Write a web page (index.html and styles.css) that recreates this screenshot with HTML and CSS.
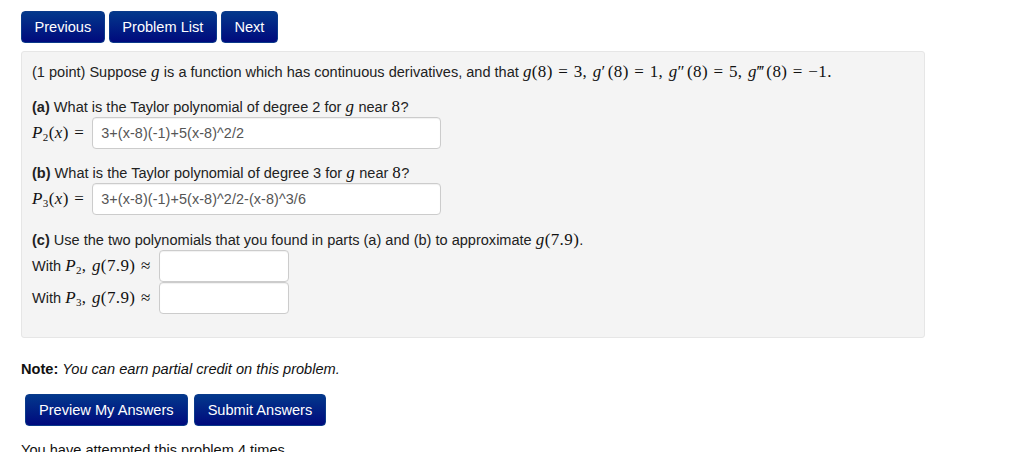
FILE: index.html
```html
<!DOCTYPE html>
<html lang="en">
<head>
<meta charset="utf-8">
<title>Problem</title>
<link rel="stylesheet" href="styles.css">
</head>
<body>
<nav class="nav">
  <a class="btn">Previous</a>
  <a class="btn">Problem List</a>
  <a class="btn">Next</a>
</nav>
<section class="panel">
  <p class="intro">(1 point) Suppose <span class="m"><i>g</i></span> is a function which has continuous derivatives, and that <span class="m"><i>g</i>(8) = 3, <i>g</i><span class="pr">′</span>(8) = 1, <i>g</i><span class="pr">″</span>(8) = 5, <i>g</i><span class="pr">‴</span>(8) = −1.</span></p>

  <p class="q"><b>(a)</b> What is the Taylor polynomial of degree 2 for <span class="m"><i>g</i></span> near <span class="m">8</span>?</p>
  <div class="row"><span class="m"><i>P</i><sub>2</sub>(<i>x</i>) =</span><input class="in wide" type="text" value="3+(x-8)(-1)+5(x-8)^2/2"></div>

  <p class="q q-b"><b>(b)</b> What is the Taylor polynomial of degree 3 for <span class="m"><i>g</i></span> near <span class="m">8</span>?</p>
  <div class="row"><span class="m"><i>P</i><sub>3</sub>(<i>x</i>) =</span><input class="in wide" type="text" value="3+(x-8)(-1)+5(x-8)^2/2-(x-8)^3/6"></div>

  <p class="q q-c"><b>(c)</b> Use the two polynomials that you found in parts (a) and (b) to approximate <span class="m"><i>g</i>(7.9)</span>.</p>
  <div class="row">With <span class="m"><i>P</i><sub>2</sub>, <i>g</i>(7.9) ≈</span><input class="in small" type="text"></div>
  <div class="row">With <span class="m"><i>P</i><sub>3</sub>, <i>g</i>(7.9) ≈</span><input class="in small" type="text"></div>
</section>
<p class="note"><b>Note:</b> <i>You can earn partial credit on this problem.</i></p>
<div class="actions">
  <a class="btn">Preview My Answers</a>
  <a class="btn">Submit Answers</a>
</div>
<p class="attempts">You have attempted this problem 4 times.</p>
</body>
</html>
```

FILE: styles.css
```css
html, body { margin: 0; height: 452px; overflow: hidden; background: #fff; }
body {
  padding: 11px 21px 0;
  box-sizing: border-box;
  font: 14.6px/20px "Liberation Sans", Arial, sans-serif;
  color: #222;
}
p { margin: 0; }
.nav { display: flex; gap: 4px; }
.nav .btn { padding: 5px 12.5px; }
.btn {
  display: block;
  box-sizing: border-box;
  height: 32px;
  padding: 5px 13px;
  border: 1px solid #0a3a8a;
  border-radius: 4px;
  background: linear-gradient(#03388c, #000a7d);
  color: #fff;
  line-height: 20px;
}
.panel {
  box-sizing: border-box;
  width: 904px;
  height: 287px;
  margin-top: 8px;
  padding: 10px;
  background: #f4f4f4;
  border: 1px solid #e6e6e6;
  border-radius: 3px;
  font-size: 14.55px;
}
.m {
  font: 17px/0 "Liberation Serif", "Times New Roman", serif;
  letter-spacing: .4px;
  word-spacing: .8px;
  color: #111;
}
.m sub { font-size: 11px; line-height: 0; vertical-align: -3px; }
.pr { margin-right: 2px; }
.q { margin-top: 15px; }
.q-b { margin-top: 14px; }
.q-c { margin-top: 15px; }
.row { display: flex; align-items: center; height: 32px; white-space: pre; }
.row .m { white-space: pre; line-height: 20px; }
.in {
  box-sizing: border-box;
  height: 32px;
  padding: 4px 8px;
  border: 1px solid #ccc;
  border-radius: 4px;
  background: #fff;
  color: #555;
  font: 14.4px/20px "Liberation Sans", Arial, sans-serif;
  letter-spacing: .08px;
  box-shadow: inset 0 1px 1px rgba(0,0,0,.06);
}
.wide { width: 349px; margin-left: 8px; }
.small { width: 130px; margin-left: 8px; }
.note { margin-top: 21px; color: #111; }
.actions { display: flex; gap: 6px; margin: 15px 0 0 4px; }
.attempts { margin-top: 14px; color: #111; }
```
